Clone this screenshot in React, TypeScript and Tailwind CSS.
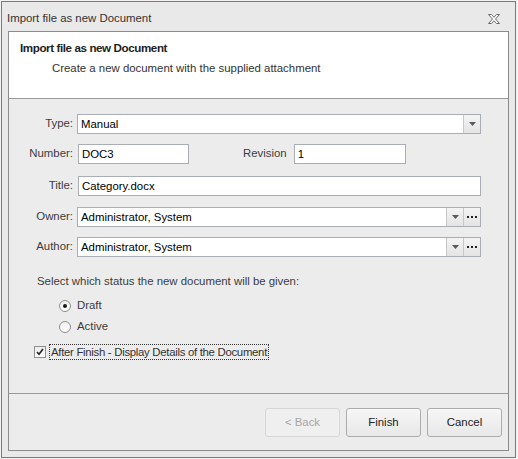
import React from "react";

const font = "font-['Liberation_Sans',Arial,sans-serif]";

function CloseIcon() {
  return (
    <svg width="14" height="12" viewBox="0 0 14 12">
      <path
        d="M1.5 1.5h3l2.5 2.8 2.5-2.8h3l-4 4.5 4 4.5h-3L7 7.7l-2.5 2.8h-3l4-4.5z"
        fill="#fff"
        stroke="#6d6d6d"
        strokeWidth="1"
        strokeLinejoin="round"
      />
    </svg>
  );
}

function Arrow() {
  return (
    <svg width="7" height="4" viewBox="0 0 7 4">
      <path d="M0 0h7L3.5 4z" fill="#5a5a5a" />
    </svg>
  );
}

function DropBtn() {
  return (
    <div className="flex w-[17px] items-center justify-center border-l border-[#c8c8c8] bg-gradient-to-b from-[#f4f4f4] to-[#e4e4e4]">
      <Arrow />
    </div>
  );
}

function DotsBtn() {
  return (
    <div className="flex w-[17px] items-center justify-center gap-[2px] border-l border-[#c8c8c8] bg-gradient-to-b from-[#f4f4f4] to-[#e4e4e4]">
      <span className="size-[2px] bg-[#222]" />
      <span className="size-[2px] bg-[#222]" />
      <span className="size-[2px] bg-[#222]" />
    </div>
  );
}

function Field({
  value,
  width,
  drop,
  dots,
}: {
  value: string;
  width: string;
  drop?: boolean;
  dots?: boolean;
}) {
  return (
    <div className={`flex h-[20px] border border-[#a9adb5] bg-white ${width}`}>
      <span className="flex-1 truncate pl-[3px] text-[11.4px] leading-[18px] text-black">
        {value}
      </span>
      {drop ? <DropBtn /> : null}
      {dots ? <DotsBtn /> : null}
    </div>
  );
}

function Row({
  label,
  className,
  children,
}: {
  label: string;
  className?: string;
  children: React.ReactNode;
}) {
  return (
    <div className={`flex items-center ${className ?? ""}`}>
      <span className="w-[68px] pr-[4px] text-right text-[11.4px] text-[#3c3c3c]">
        {label}
      </span>
      {children}
    </div>
  );
}

function Radio({ label, checked }: { label: string; checked?: boolean }) {
  return (
    <div className="flex h-[18px] items-center gap-[6px]">
      <span className="flex size-[12px] items-center justify-center rounded-full border border-[#8e8f8f] bg-gradient-to-b from-[#f0f0f0] to-white">
        {checked ? <span className="size-[4px] rounded-full bg-[#1a1a1a]" /> : null}
      </span>
      <span className="text-[11.4px] text-[#3c3c3c]">{label}</span>
    </div>
  );
}

function Btn({ label, disabled }: { label: string; disabled?: boolean }) {
  return (
    <div
      className={`flex h-[29px] w-[75px] items-center justify-center rounded-[3px] border text-[11.4px] ${
        disabled
          ? "border-[#d6d6d6] bg-[#efefef] text-[#a6a6a6]"
          : "border-[#acacac] bg-gradient-to-b from-[#f6f6f6] to-[#e8e8e8] text-[#222]"
      }`}
    >
      {label}
    </div>
  );
}

export default function App() {
  return (
    <div className={`h-[459px] w-[518px] bg-[#f3f3f3] pl-[1px] pt-[1px] ${font}`}>
      <div className="flex h-[457px] w-[515px] flex-col border border-[#7a7a7a] bg-[#e9e9e9]">
        <div className="flex h-[29px] items-center justify-between pl-[5px] pr-[14px] pt-[5px]">
          <span className="text-[11.4px] text-[#333]">Import file as new Document</span>
          <CloseIcon />
        </div>
        <div className="mx-[6px] mb-[6px] flex flex-1 flex-col border border-[#8c8c8c] bg-[#ececec]">
          <div className="h-[67px] border-b border-[#9a9a9a] bg-white">
            <p className="pl-[11px] pt-[7px] text-[11.6px] font-bold tracking-[-0.4px] text-[#222]">
              Import file as new Document
            </p>
            <p className="pl-[43px] pt-[4px] text-[11.4px] text-[#333]">
              Create a new document with the supplied attachment
            </p>
          </div>

          <div className="flex-1 border-b border-[#9a9a9a] pt-[15px]">
            <Row label="Type:">
              <Field value="Manual" width="w-[404px]" drop />
            </Row>
            <Row label="Number:" className="mt-[10px]">
              <Field value="DOC3" width="ml-[1px] w-[111px]" />
              <span className="ml-[54px] text-[11.4px] text-[#3c3c3c]">Revision</span>
              <Field value="1" width="ml-[7px] w-[112px]" />
            </Row>
            <Row label="Title:" className="mt-[12px]">
              <Field value="Category.docx" width="ml-[1px] w-[403px]" />
            </Row>
            <Row label="Owner:" className="mt-[11px]">
              <Field value="Administrator, System" width="w-[404px]" drop dots />
            </Row>
            <Row label="Author:" className="mt-[10px]">
              <Field value="Administrator, System" width="w-[404px]" drop dots />
            </Row>

            <p className="mt-[16px] pl-[28px] text-[11.4px] leading-[16px] text-[#3c3c3c]">
              Select which status the new document will be given:
            </p>
            <div className="mt-[8px] flex flex-col gap-[3px] pl-[50px]">
              <Radio label="Draft" checked />
              <Radio label="Active" />
            </div>
            <div className="mt-[8px] flex items-center pl-[25px]">
              <span className="flex size-[12px] items-center justify-center border border-[#8e8f8f] bg-gradient-to-b from-[#ececec] to-white">
                <svg width="8" height="8" viewBox="0 0 8 8">
                  <path d="M1 4l2 2.2L7 1" fill="none" stroke="#222" strokeWidth="1.6" />
                </svg>
              </span>
              <span className="ml-[3px] border border-dotted border-[#333] px-[1px] text-[11.4px] leading-[14px] tracking-[-0.3px] text-[#333]">
                After Finish - Display Details of the Document
              </span>
            </div>
          </div>

          <div className="flex h-[56px] justify-end gap-[6px] pr-[6px] pt-[14px]">
            <Btn label="< Back" disabled />
            <Btn label="Finish" />
            <Btn label="Cancel" />
          </div>
        </div>
      </div>
    </div>
  );
}
